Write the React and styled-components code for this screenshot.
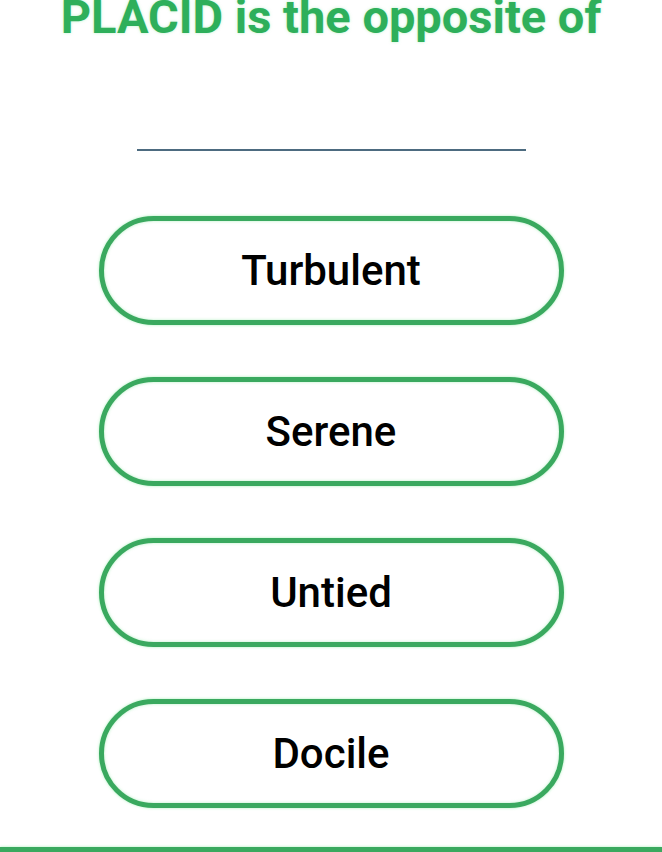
import React from "react";
import styled, { createGlobalStyle } from "styled-components";

const GlobalStyle = createGlobalStyle`
  html, body {
    margin: 0;
    padding: 0;
    background: #ffffff;
    font-family: Roboto, "Liberation Sans", sans-serif;
  }
  #root {
    width: 662px;
    height: 852px;
    overflow: hidden;
  }
`;

const Screen = styled.div`
  width: 662px;
  height: 852px;
  display: flex;
  flex-direction: column;
  align-items: center;
  position: relative;
  overflow: hidden;
`;

const Question = styled.h1`
  margin: -10px 0 0;
  font-size: 47px;
  font-weight: 700;
  line-height: 53px;
  color: #2eaf5b;
  text-shadow: 0 0 3px rgba(120, 230, 150, 0.5);
  white-space: nowrap;
`;

const Blank = styled.div`
  width: 389px;
  height: 2px;
  margin-top: 106px;
  background: #4d6b80;
`;

const Options = styled.div`
  display: flex;
  flex-direction: column;
  gap: 52px;
  margin-top: 65px;
`;

const Option = styled.button`
  width: 465px;
  height: 109px;
  box-sizing: border-box;
  border: 5px solid #3aa95f;
  border-radius: 55px;
  background: #ffffff;
  box-shadow: 0 0 3px rgba(110, 230, 140, 0.6), inset 0 0 3px rgba(110, 230, 140, 0.5);
  display: flex;
  align-items: center;
  justify-content: center;
  font-family: Roboto, "Liberation Sans", sans-serif;
  font-size: 42px;
  font-weight: 500;
  color: #000000;
  padding: 0;
  cursor: pointer;
`;

const BottomBar = styled.div`
  position: absolute;
  left: 0;
  right: 0;
  bottom: 0;
  height: 5px;
  background: #3aa95f;
  box-shadow: 0 0 3px rgba(110, 230, 140, 0.6);
`;

const options = ["Turbulent", "Serene", "Untied", "Docile"];

export default function App() {
  return (
    <Screen>
      <GlobalStyle />
      <Question>PLACID is the opposite of</Question>
      <Blank />
      <Options>
        {options.map(o => (
          <Option key={o}>{o}</Option>
        ))}
      </Options>
      <BottomBar />
    </Screen>
  );
}
